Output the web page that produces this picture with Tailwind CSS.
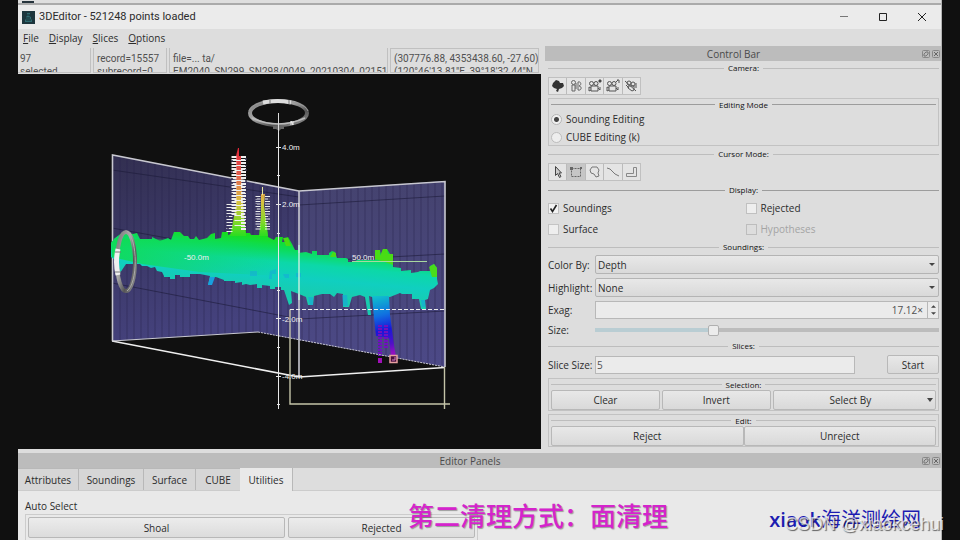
<!DOCTYPE html>
<html lang="en">
<head>
<meta charset="utf-8">
<title>3DEditor</title>
<script src="https://cdn.jsdelivr.net/npm/@tailwindcss/browser@4"></script>
</head>
<body class="h-screen overflow-hidden bg-[#101010] px-[18px] font-['Open_Sans','Noto_Sans_CJK_SC',sans-serif] text-[10px] leading-4 text-[#2c2c2c]">
<div class="relative flex h-full flex-col border-r border-[#b4b4b4] bg-[#dddddd]">
  <div class="h-[5px] shrink-0 border-b-2 border-[#aaaaaa] bg-[#dedede] pl-1"><div class="h-[3px] w-3 border-t border-[#dedede] bg-[#26343c]"></div></div>

  <header class="flex h-6 shrink-0 items-center bg-[#ebebeb] pl-1">
    <svg class="mr-1 h-[13px] w-[13px]" viewBox="0 0 13 13"><rect width="13" height="13" fill="#1d363d"/><path d="M5 2h3v2l-1 1 2 1v2l1 1v2H3V9l1-1V6l1-1z" fill="#2f6a70"/><path d="M5 4h3M4 7h4M4 9h5" stroke="#17282e"/></svg>
    <h1 class="flex-1 font-['Roboto',sans-serif] text-[11px]">3DEditor - 521248 points loaded</h1>
    <div class="flex">
      <button aria-label="Minimize" class="flex w-[39px] justify-center"><svg class="h-3 w-3" viewBox="0 0 12 12" stroke="#777"><path d="M2 5.5h8"/></svg></button>
      <button aria-label="Maximize" class="flex w-[39px] justify-center"><svg class="h-3 w-3" viewBox="0 0 12 12" fill="none" stroke="#222"><path d="M2.5 2.5h7v7h-7z"/></svg></button>
      <button aria-label="Close" class="flex w-[39px] justify-center"><svg class="h-3 w-3" viewBox="0 0 12 12" stroke="#222"><path d="M2 2l8 8M10 2l-8 8"/></svg></button>
    </div>
  </header>

  <nav class="flex h-[17px] shrink-0 items-center gap-[10px] pl-[5px]">
    <button><u>F</u>ile</button><button><u>D</u>isplay</button><button><u>S</u>lices</button><button><u>O</u>ptions</button>
  </nav>

  <main class="grid shrink-0 grid-cols-[523fr_400fr]">
    <section class="min-w-0">
      <div class="flex h-7 gap-[2px] pt-[2px] pb-[1px] font-['Roboto',sans-serif] text-[10px] leading-[13px] text-[#505050]">
        <div class="w-[73px] shrink-0 overflow-hidden border-r border-b border-[#c0c0c0] pt-1 pl-[2px]">97<br>selected</div>
        <div class="w-[74px] shrink-0 overflow-hidden border-r border-b border-l border-[#c0c0c0] pt-1 pl-[3px]">record=15557<br>subrecord=0</div>
        <div class="min-w-0 flex-1 overflow-hidden border-r border-b border-l border-[#c0c0c0] pt-1 pl-[3px] whitespace-nowrap">file=... ta/<br>EM2040_SN299_SN298/0049_20210304_021512</div>
        <div class="mr-[2px] w-[149px] shrink-0 overflow-hidden border border-[#c0c0c0] pt-[3px] pl-[3px] whitespace-nowrap">(307776.88, 4353438.60, -27.60)<br>(120°46'13.81"E, 39°18'32.44"N</div>
      </div>
      <svg class="block w-full bg-[#101010]" viewBox="18 74 523 375" role="img" aria-label="3D soundings view">
        <defs>
          <linearGradient id="wallL" x1="0" y1="0" x2="0.3" y2="1"><stop offset="0" stop-color="#322f50"/><stop offset="1" stop-color="#45427e"/></linearGradient>
          <linearGradient id="wallR" x1="0" y1="0" x2="0" y2="1"><stop offset="0" stop-color="#45436f"/><stop offset="1" stop-color="#4c4987"/></linearGradient>
          <pattern id="stripe" width="7" height="8" patternUnits="userSpaceOnUse"><path d="M1 0v8" stroke="#25224a" stroke-opacity=".22" stroke-width="2"/></pattern>
          <linearGradient id="cloud" gradientUnits="userSpaceOnUse" x1="250" y1="234" x2="245" y2="290"><stop offset="0" stop-color="#18dd18"/><stop offset=".22" stop-color="#0cdc5a"/><stop offset=".45" stop-color="#0cd8a8"/><stop offset=".7" stop-color="#10cfc0"/><stop offset="1" stop-color="#18ccae"/></linearGradient>
          <linearGradient id="leftGreen" gradientUnits="userSpaceOnUse" x1="112" y1="0" x2="280" y2="0"><stop offset="0" stop-color="#10dc50" stop-opacity=".85"/><stop offset="1" stop-color="#10dc50" stop-opacity="0"/></linearGradient>
          <linearGradient id="plume" x1="0" y1="0" x2="0.1" y2="1"><stop offset="0" stop-color="#10c4cc"/><stop offset=".35" stop-color="#1070e0"/><stop offset=".6" stop-color="#1818d8"/><stop offset=".85" stop-color="#5010c8"/><stop offset="1" stop-color="#9010c0"/></linearGradient>
          <linearGradient id="tower" gradientUnits="userSpaceOnUse" x1="0" y1="150" x2="0" y2="235"><stop offset="0" stop-color="#e02838"/><stop offset=".3" stop-color="#e06050"/><stop offset=".6" stop-color="#dcc040"/><stop offset=".85" stop-color="#80d828"/><stop offset="1" stop-color="#30dc20"/></linearGradient>
          <linearGradient id="metal" x1="0" y1="0" x2="1" y2="1"><stop offset="0" stop-color="#777"/><stop offset=".4" stop-color="#aaa"/><stop offset=".7" stop-color="#555"/><stop offset="1" stop-color="#999"/></linearGradient>
        </defs>
        <path d="M112 155L299 191V340L258 332L112 341z" fill="url(#wallL)"/>
        <path d="M299 191L445 181V367L299 340z" fill="url(#wallR)"/>
        <path d="M112 155L299 191L445 181V367L258 332L112 341z" fill="url(#stripe)"/>
        <g fill="none" stroke="#1c1a38" stroke-opacity=".6"><path d="M112 170L299 197M299 205L445 196M112 228L299 262L445 254M112 283L299 319L445 311"/></g>
        <g fill="none" stroke="#c8c8d0" stroke-width="1.6"><path d="M112.5 341V155L299 191L445 181.500V367"/><path d="M299 191V377"/><path d="M112 341L299 377L445 367.500" stroke="#f0f0f0"/><path d="M112 341L258 332" stroke-width="1"/><path d="M258 332L445 367" stroke-width="1" stroke-dasharray="2 1"/></g>

        <path fill="url(#cloud)" d="M111 243L115 238L123 232L133 234L137 233L140 239H152V237L160 241L168 238L171 240L174 232L180 232L184 236H188L190 239H194L196 236L199 240L207 238L211 234L215 233V239L221 238L222 232H228V235L233 233L236 221H244L246 233H250L251 235H260L262 222H266L268 237L274 240L276 237H283L282 242H286L284 238L288 237L292 244L295 250H298V253L306 252L312 254V251H317V255H329V253L332 251L335 252L337 258H346L348 259V262H354L357 260H375V250H380L381 255L383 249H387L390 254H393V267L401 268V271L411 270V273L418 272L420 271H430V266L434 264L437 268V279L438 284L434 288L430 290L428 299L425 300L426 309H421L419 299L412 299V294L402 294L400 293L390 297H372L369 296L371 315H368L365 297L360 295L352 297L349 307H343V294L337 293L334 297L330 294H322L314 296L313 305H308L306 297L299 294L291 291L292 303L289 305L284 290H281V287H275V289H270V286L262 285V288H257V284L250 285L246 284L242 285V282L235 283V281H224V280L216 277L212 277V285L208 285L210 276L200 274H190V277H180V275H175V279H170V277H164V276L162 272L157 271L155 267L151 268L147 266H142L140 264H126L120 273L118 262L111 257z"/>
        <path fill="url(#leftGreen)" d="M111 243L115 238L140 239L250 242L280 246V276L200 272L142 264L112 257z"/>
        <g fill="#18a0e0"><path d="M210 277H215L212 285H208z"/><path d="M250 271h7v5h-7zM270 271l6-2v5h-4v5h-3zM283 274h6v4h-4zM296 273h5v4h-5z" fill-opacity=".45"/><path d="M342 295H347L348 306H343zM308 297H313V305H310zM421 300H425V307H422z" fill-opacity=".55"/></g>
        <path fill="#50dc10" d="M375 259V250H380V256L383 249H387L388 254H393V265L385 262zM333 252L336 253V257H330zM283 238L288 238L291 246H286zM429 267L434 264L437 268V277H432z" fill-opacity=".9"/>
        <path fill="url(#plume)" d="M372 296H389L390 315L394 345L396 357H391L389 338L376 336L374 318z"/>
        <g fill="none" stroke="#7010c0" stroke-width="3" stroke-dasharray="2 1"><path d="M380 325V356M386 325V348" stroke-width="4"/></g>
        <rect x="378" y="358" width="4" height="5" fill="#a010b8"/><rect x="390" y="355.500" width="7" height="7" fill="#4a1040" stroke="#e8a0a0" stroke-width="1.500"/><path d="M392 360h3v-3" stroke="#d080c0" fill="none"/>

        <path fill="url(#tower)" d="M238 148H239V156H241V170L242 190L244 215L246 236H230L233 222L236 205V156z"/>
        <path fill="url(#tower)" d="M261 194H265L264 205L266 220L268 236H259L261 215z"/>
        <g fill="none" stroke="#eeeeee">
          <path d="M234 156V215" stroke-width="5" stroke-dasharray="2 1"/>
          <path d="M243.500 156V231" stroke-width="5" stroke-dasharray="2 1"/>
          <path d="M238.500 160V228" stroke-width="8" stroke-dasharray="1 4"/>
          <path d="M229.500 204V232" stroke-width="6" stroke-dasharray="1 2"/>
          <path d="M258 196V231" stroke-width="5" stroke-dasharray="1 1.500"/>
          <path d="M267.500 196V231" stroke-width="5" stroke-dasharray="1 1.500"/>
        </g>
        <path fill="none" stroke="#34314f" stroke-width="1.500" stroke-dasharray="2 5 1 3" d="M232 160V200M246 158V230M256 197V230M269 198V230M228 205V230"/>
        <path d="M262.500 187V195" stroke="#e8e8a0"/>

        <g stroke="#e8e8e8" fill="none"><path d="M278.500 113V409"/><path d="M276 147.500h5M277 175.500h3M276 204.500h5M277 233.500h3M277 290.500h3M276 318.500h5M277 347.500h3M276 376.500h5M277 404.500h3"/></g>
        <path d="M352 261.500H427" stroke="#a8d8a0"/>
        <path d="M299 245V300" stroke="#bfeedd" stroke-width="1.500"/>
        <g fill="none" stroke="#c4c4a8"><path d="M290 309.500V404H450M444.500 367V409" stroke-width="1.400"/><path d="M290 309.500H445" stroke="#eee" stroke-dasharray="4 2"/></g>
        <g fill="#f0f0f0" font-family="'Liberation Sans',sans-serif" font-size="8"><text x="282" y="150">4.0m</text><text x="282" y="207">2.0m</text><text x="282" y="322">-2.0m</text><text x="282" y="379">-4.0m</text><text x="184" y="260">-50.0m</text><text x="352" y="260">50.0m</text></g>

        <g fill="none"><ellipse cx="278.500" cy="113" rx="28.500" ry="12" stroke="url(#metal)" stroke-width="4"/><path d="M249 111c4-14 54-14 59 0" stroke="#999"/><path d="M263 102.500Q278 99.500 291 102.500" stroke="#ddd" stroke-width="4"/><path d="M270 100v4M289 100v4" stroke="#777"/><path d="M252 118Q278 130 305 118" stroke="#bbb" stroke-width="1.500"/><path d="M291 125v-4l2 4v-4" stroke="#eee"/></g>
        <path d="M273 126h11v3h-3l-2 2-3-2h-3z" fill="#666"/><path d="M278.500 113v20" stroke="#ddd"/>
        <g fill="none"><ellipse cx="126" cy="261.500" rx="9" ry="29.500" stroke="url(#metal)" stroke-width="4"/><path d="M127 231C138 240 138 283 127 291" stroke="#aaa"/><path d="M118 249Q115 262 118 275" stroke="#f0f0f0" stroke-width="5"/><path d="M115 252h6M115 272h6" stroke="#777"/></g>
      </svg>
    </section>

    <aside class="min-w-0 pl-1">
      <div class="flex h-[15px] items-center bg-[#bcbcbc] text-[#4a4a4a]">
        <h2 class="flex-1 text-center">Control Bar</h2>
        <button aria-label="Float control bar" class="mr-[2px]"><svg class="h-[8px] w-[8px]" viewBox="0 0 8 8" fill="none" stroke="#777"><rect x=".5" y=".5" width="7" height="7" rx="1" stroke="#888"/><path d="M2 4l2-2h2v2l-2 2H2z"/></svg></button>
        <button aria-label="Close control bar" class="mr-[1px]"><svg class="h-[8px] w-[8px]" viewBox="0 0 8 8" fill="none" stroke="#666"><rect x=".5" y=".5" width="7" height="7" rx="1" stroke="#888"/><path d="M2 2l4 4M6 2l-4 4"/></svg></button>
      </div>
      <div class="flex flex-col pt-[1px] pr-[2px] pl-[3px]">
        <h3 class="flex h-3 items-center gap-1 text-[8px] leading-3 text-[#111] before:h-px before:flex-1 before:bg-[#bdbdbd] after:h-px after:flex-1 after:bg-[#bdbdbd]">Camera:</h3>
        <div class="mt-[3px] flex h-[18px] w-[93px] divide-x divide-[#bbbbbb] border border-[#c0c0c0] bg-[#e4e4e4]">
          <button aria-label="Reset camera" class="flex flex-1 items-center justify-center"><svg class="h-[14px] w-[14px]" viewBox="0 0 14 14"><path d="M5 1l3 1 1 2 3 0 1 3-2 2-3 1-1 3-2-1 1-2-3-1-2-2 1-3z" fill="#333"/></svg></button>
          <button aria-label="Side view" class="flex flex-1 items-center justify-center"><svg class="h-[14px] w-[14px]" viewBox="0 0 14 14" fill="none" stroke="#666"><circle cx="4.500" cy="3.500" r="2"/><path d="M3 6h3v6H3zM9 3c3-1 4 3 1 4 3 0 3 5-1 4zM7 4v6"/></svg></button>
          <button aria-label="Record camera" class="flex flex-1 items-center justify-center"><svg class="h-[14px] w-[14px]" viewBox="0 0 14 14" fill="none" stroke="#555"><circle cx="3.500" cy="4.500" r="2"/><circle cx="8" cy="4.500" r="2"/><path d="M3 7h7v5H3zM3 9l-2-1v4l2-1M10 9l2 2v-3"/><path d="M11 1h2v2h-2z" fill="#222"/></svg></button>
          <button aria-label="Play camera" class="flex flex-1 items-center justify-center"><svg class="h-[14px] w-[14px]" viewBox="0 0 14 14" fill="none" stroke="#555"><circle cx="3.500" cy="4.500" r="2"/><circle cx="8" cy="4.500" r="2"/><path d="M3 7h7v5H3zM3 9l-2-1v4l2-1M10 9l2 2v-3M10 3l2-2M11 1h2v3" /></svg></button>
          <button aria-label="Camera off" class="flex flex-1 items-center justify-center"><svg class="h-[14px] w-[14px]" viewBox="0 0 14 14" fill="none" stroke="#555"><circle cx="5" cy="4" r="2"/><circle cx="9" cy="5" r="2"/><path d="M4 7h6v4l-2 1-4-3zM1 2l11 10M2 6l3 3M12 4v5"/></svg></button>
        </div>

        <fieldset class="mt-[3px] flex h-12 min-w-0 flex-col border border-[#c2c2c2] px-[2px]">
          <h3 class="flex h-[11px] items-center gap-1 text-[8px] leading-3 text-[#111] before:h-px before:flex-1 before:bg-[#9c9c9c] after:h-px after:flex-1 after:bg-[#9c9c9c]">Editing Mode</h3>
          <label class="flex h-[18px] items-center gap-1"><input type="radio" name="mode" checked class="h-[11px] w-[11px] appearance-none rounded-full border border-[#b5b5b5] bg-[#f0f0f0] bg-[radial-gradient(circle,#444_0_2px,transparent_3px)]">Sounding Editing</label>
          <label class="flex h-[18px] items-center gap-1"><input type="radio" name="mode" class="h-[11px] w-[11px] appearance-none rounded-full border border-[#bcbcbc] bg-[#eeeeee]">CUBE Editing (k)</label>
        </fieldset>

        <h3 class="mt-[2px] flex h-3 items-center gap-1 text-[8px] leading-3 text-[#111] before:h-px before:flex-1 before:bg-[#bdbdbd] after:h-px after:flex-1 after:bg-[#bdbdbd]">Cursor Mode:</h3>
        <div class="mt-[3px] flex h-[18px] w-[93px] divide-x divide-[#bbbbbb] border border-[#c0c0c0] bg-[#e4e4e4]">
          <button aria-label="Pointer" class="flex flex-1 items-center justify-center"><svg class="h-[14px] w-[14px]" viewBox="0 0 14 14" fill="#ccc" stroke="#444"><path d="M4.500 1.500v9l2-2 2 4 1.500-1-2-3.500h2.500z"/></svg></button>
          <button aria-label="Rectangle select" class="flex flex-1 items-center justify-center bg-[#c6c6c6]"><svg class="h-[14px] w-[14px]" viewBox="0 0 14 14" fill="none" stroke="#666"><path d="M2.500 3.500h9v8h-9z" stroke-dasharray="2 1"/><path d="M1 2h3v3H1zM11 2h2v2h-2z" fill="#666" stroke="none"/></svg></button>
          <button aria-label="Lasso select" class="flex flex-1 items-center justify-center"><svg class="h-[14px] w-[14px]" viewBox="0 0 14 14" fill="none" stroke="#777"><path d="M4 2h5l2 3-1 3 1 3-3 1-2-3-3-1-1-3z"/></svg></button>
          <button aria-label="Line select" class="flex flex-1 items-center justify-center"><svg class="h-[14px] w-[14px]" viewBox="0 0 14 14" fill="none" stroke="#777"><path d="M1 3l3 1 5 5 4 2"/></svg></button>
          <button aria-label="Corner select" class="flex flex-1 items-center justify-center"><svg class="h-[14px] w-[14px]" viewBox="0 0 14 14" fill="none" stroke="#888"><path d="M9.500 2.500h3v9h-10v-3h7z"/></svg></button>
        </div>

        <h3 class="mt-[3px] flex h-3 items-center gap-1 text-[8px] leading-3 text-[#111] before:h-px before:flex-1 before:bg-[#9c9c9c] after:h-px after:flex-1 after:bg-[#9c9c9c]">Display:</h3>
        <div class="mt-[2px] grid grid-cols-2 gap-y-[1px]">
          <label class="flex h-5 items-center gap-1"><input type="checkbox" checked class="peer sr-only"><svg class="h-[11px] w-[11px] border border-[#c0c0c0] bg-[#f2f2f2]" viewBox="0 0 9 9" fill="none" stroke="#222" stroke-width="1.600"><path d="M1.500 4.500l2 3L7.500 1"/></svg>Soundings</label>
          <label class="flex h-5 items-center gap-1"><input type="checkbox" class="ml-[2px] h-[11px] w-[11px] appearance-none border border-[#c0c0c0] bg-[#eeeeee]">Rejected</label>
          <label class="flex h-5 items-center gap-1"><input type="checkbox" class="h-[11px] w-[11px] appearance-none border border-[#c4c4c4] bg-[#eeeeee]">Surface</label>
          <label class="flex h-5 items-center gap-1 text-[#a4a4a4]"><input type="checkbox" disabled class="ml-[2px] h-[11px] w-[11px] appearance-none border border-[#bdbdbd] bg-[#dddddd]">Hypotheses</label>
        </div>

        <h3 class="mt-[2px] flex h-3 items-center gap-1 text-[8px] leading-3 text-[#111] before:h-px before:flex-1 before:bg-[#bdbdbd] after:h-px after:flex-1 after:bg-[#bdbdbd]">Soundings:</h3>
        <div class="mt-[2px] grid grid-cols-[47px_1fr] items-center gap-y-1">
          <label for="color">Color By:</label>
          <div class="relative"><select id="color" class="block h-[19px] w-full appearance-none rounded-[2px] border border-[#b4b4b4] bg-linear-to-b from-[#e8e8e8] to-[#d9d9d9] pl-[2px]"><option>Depth</option></select><svg class="pointer-events-none absolute top-2 right-1 h-[3px] w-[6px]" viewBox="0 0 6 3" fill="#444"><path d="M0 0h6L3 3z"/></svg></div>
          <label for="highlight">Highlight:</label>
          <div class="relative"><select id="highlight" class="block h-[19px] w-full appearance-none rounded-[2px] border border-[#b4b4b4] bg-linear-to-b from-[#e8e8e8] to-[#d9d9d9] pl-[2px]"><option>None</option></select><svg class="pointer-events-none absolute top-2 right-1 h-[3px] w-[6px]" viewBox="0 0 6 3" fill="#444"><path d="M0 0h6L3 3z"/></svg></div>
          <label for="exag">Exag:</label>
          <div class="flex h-[18px] border border-[#b8b8b8] bg-[#ebebeb]">
            <input id="exag" value="17.12×" class="min-w-0 flex-1 pr-1 text-right text-[#505050]">
            <div class="flex w-[11px] flex-col justify-center gap-1 border-l border-[#b8b8b8]">
              <button aria-label="Increase" class="flex justify-center"><svg class="h-[3px] w-[5px]" viewBox="0 0 6 3" fill="#444"><path d="M0 3h6L3 0z"/></svg></button>
              <button aria-label="Decrease" class="flex justify-center"><svg class="h-[3px] w-[5px]" viewBox="0 0 6 3" fill="#444"><path d="M0 0h6L3 3z"/></svg></button>
            </div>
          </div>
        </div>
        <div class="mt-[3px] grid h-4 grid-cols-[47px_1fr] items-center">
          <label for="size">Size:</label>
          <input id="size" type="range" value="34" class="h-3 w-full appearance-none bg-[linear-gradient(90deg,#b9cdd3_34%,#bcbcbc_34%)] bg-[size:100%_4px] bg-center bg-no-repeat [&::-webkit-slider-thumb]:h-[11px] [&::-webkit-slider-thumb]:w-[11px] [&::-webkit-slider-thumb]:appearance-none [&::-webkit-slider-thumb]:rounded-[2px] [&::-webkit-slider-thumb]:border [&::-webkit-slider-thumb]:border-[#b0b0b0] [&::-webkit-slider-thumb]:bg-[#ececec]">
        </div>

        <h3 class="mt-[2px] flex h-3 items-center gap-1 text-[8px] leading-3 text-[#111] before:h-px before:flex-1 before:bg-[#bdbdbd] after:h-px after:flex-1 after:bg-[#bdbdbd]">Slices:</h3>
        <div class="mt-[3px] flex h-[19px] items-center">
          <label for="slice" class="w-[47px] whitespace-nowrap">Slice Size:</label>
          <input id="slice" value="5" class="h-[18px] min-w-0 flex-1 border border-[#b8b8b8] bg-[#ebebeb] pl-[1px] text-[#505050]">
          <button class="ml-8 h-[19px] w-[52px] rounded-[2px] border border-[#b8b8b8] bg-linear-to-b from-[#e8e8e8] to-[#d9d9d9]">Start</button>
        </div>

        <section class="mt-1 flex h-[33px] flex-col border border-[#c2c2c2] px-[2px]">
          <h3 class="flex h-[11px] items-center gap-1 text-[8px] leading-3 text-[#111] before:h-px before:flex-1 before:bg-[#bdbdbd] after:h-px after:flex-1 after:bg-[#bdbdbd]">Selection:</h3>
          <div class="grid h-5 grid-cols-[2fr_2fr_3fr] gap-[2px] text-center">
            <button class="rounded-[2px] border border-[#b8b8b8] bg-linear-to-b from-[#e8e8e8] to-[#d9d9d9]">Clear</button>
            <button class="rounded-[2px] border border-[#b8b8b8] bg-linear-to-b from-[#e8e8e8] to-[#d9d9d9]">Invert</button>
            <button class="flex items-center rounded-[2px] border border-[#b8b8b8] bg-linear-to-b from-[#e8e8e8] to-[#d9d9d9] pr-[2px]"><span class="flex-1">Select By</span><svg class="h-1 w-[6px]" viewBox="0 0 6 4" fill="#444"><path d="M0 0h6L3 4z"/></svg></button>
          </div>
        </section>
        <section class="mt-[3px] flex h-[33px] flex-col border border-[#c2c2c2] px-[2px]">
          <h3 class="flex h-[11px] items-center gap-1 text-[8px] leading-3 text-[#111] before:h-px before:flex-1 before:bg-[#bdbdbd] after:h-px after:flex-1 after:bg-[#bdbdbd]">Edit:</h3>
          <div class="grid h-5 grid-cols-2">
            <button class="rounded-[2px] border border-[#b8b8b8] bg-linear-to-b from-[#e8e8e8] to-[#d9d9d9]">Reject</button>
            <button class="rounded-[2px] border border-[#b8b8b8] bg-linear-to-b from-[#e8e8e8] to-[#d9d9d9]">Unreject</button>
          </div>
        </section>
      </div>
    </aside>
  </main>

  <section class="mt-1 flex min-h-0 flex-1 flex-col">
    <div class="flex h-[15px] shrink-0 items-center bg-[#bcbcbc] text-[#4a4a4a]">
      <h2 class="flex-1 text-center">Editor Panels</h2>
      <button aria-label="Float editor panels" class="mr-[2px]"><svg class="h-[8px] w-[8px]" viewBox="0 0 8 8" fill="none" stroke="#777"><rect x=".5" y=".5" width="7" height="7" rx="1" stroke="#888"/><path d="M2 4l2-2h2v2l-2 2H2z"/></svg></button>
      <button aria-label="Close editor panels" class="mr-[1px]"><svg class="h-[8px] w-[8px]" viewBox="0 0 8 8" fill="none" stroke="#666"><rect x=".5" y=".5" width="7" height="7" rx="1" stroke="#888"/><path d="M2 2l4 4M6 2l-4 4"/></svg></button>
    </div>
    <div role="tablist" class="flex h-[23px] shrink-0 border-b border-[#cccccc]">
      <button role="tab" class="w-[61px] border-t border-r border-[#b8b8b8] bg-[#d6d6d6]">Attributes</button>
      <button role="tab" class="w-[65px] border-t border-r border-[#b8b8b8] bg-[#d6d6d6]">Soundings</button>
      <button role="tab" class="w-[52px] border-t border-r border-[#b8b8b8] bg-[#d6d6d6]">Surface</button>
      <button role="tab" class="w-[44px] border-t border-[#b8b8b8] bg-[#d6d6d6]">CUBE</button>
      <button role="tab" aria-selected="true" class="-mb-px w-[53px] border-r border-[#b8b8b8] bg-[#e9e9e9]">Utilities</button>
    </div>
    <div class="min-h-0 flex-1 overflow-hidden bg-[#e9e9e9] pt-[7px] pl-[7px]">
      <h3>Auto Select</h3>
      <div class="grid w-[453px] grid-cols-[257fr_187fr] gap-[3px] border border-[#cccccc] p-[2px]">
        <button class="h-[21px] rounded-[2px] border border-[#b8b8b8] bg-linear-to-b from-[#ececec] to-[#dcdcdc]">Shoal</button>
        <button class="h-[21px] rounded-[2px] border border-[#b8b8b8] bg-linear-to-b from-[#ececec] to-[#dcdcdc]">Rejected</button>
      </div>
    </div>
  </section>

  <p class="absolute bottom-1 left-[390px] text-[26px] leading-10 font-medium whitespace-nowrap text-[#d424cc] [text-shadow:1px_1px_1px_#0005]">第二清理方式：面清理</p>
  <p class="absolute right-5 bottom-1 text-[20px] leading-8 whitespace-nowrap text-[#1c1cb0]"><span class="font-semibold">xiaok</span>海洋测绘网</p>
  <p class="absolute -right-[3px] bottom-1 font-['Liberation_Sans',sans-serif] text-[18px] leading-6 whitespace-nowrap text-white/70 [text-shadow:1px_1px_1px_#0009]">CSDN @xiaokcehui</p>
</div>
</body>
</html>
